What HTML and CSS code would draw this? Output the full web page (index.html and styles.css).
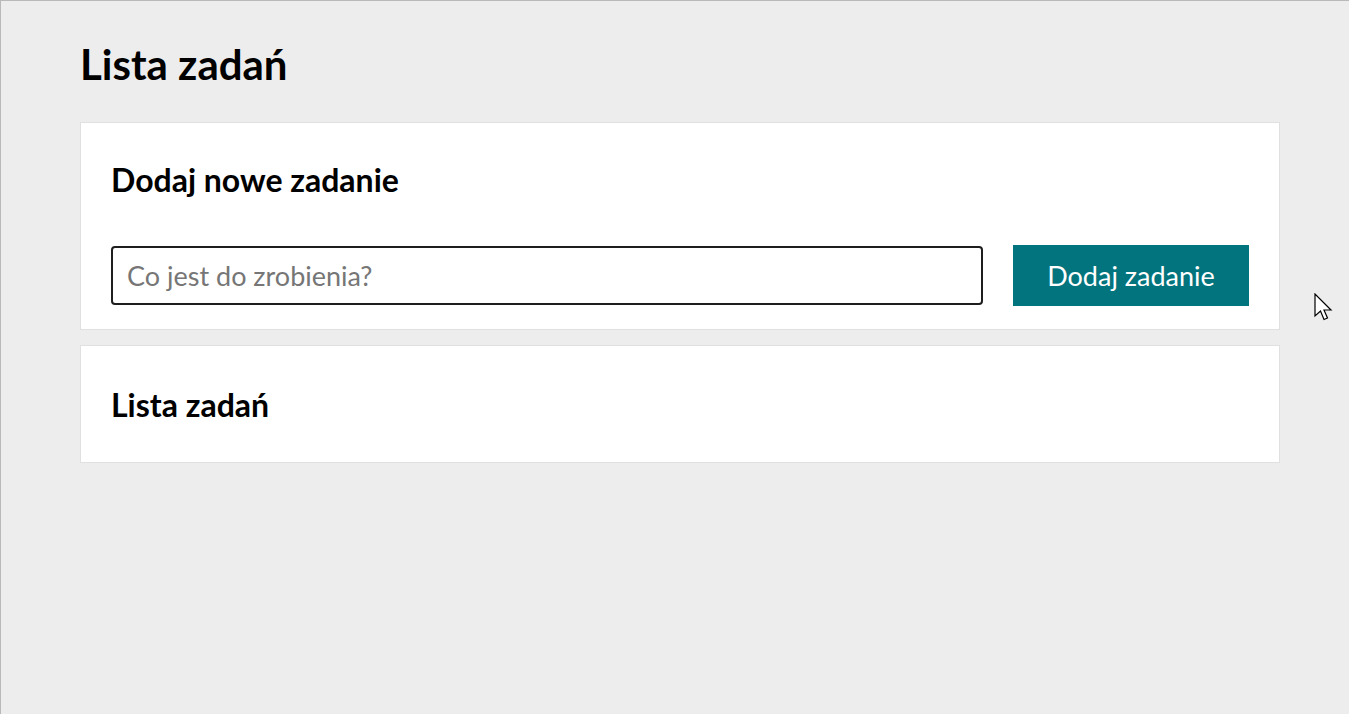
FILE: index.html
```html
<!DOCTYPE html>
<html lang="pl">
<head>
<meta charset="utf-8">
<title>Lista zadań</title>
<link rel="stylesheet" href="styles.css">
</head>
<body>
<div class="page">
  <main class="container">
    <h1 class="title">Lista zadań</h1>
    <section class="card card-add">
      <h2 class="card-title">Dodaj nowe zadanie</h2>
      <form class="add-form">
        <input class="add-input" type="text" placeholder="Co jest do zrobienia?">
        <button class="add-btn" type="button">Dodaj zadanie</button>
      </form>
    </section>
    <section class="card card-list">
      <h2 class="card-title">Lista zadań</h2>
    </section>
  </main>
  <svg class="cursor" width="19" height="28" viewBox="0 0 19 28" aria-hidden="true">
    <path d="M1 1 L1 23 L6.5 18 L10 26.5 L13.5 25 L10 17 L17 17 Z" fill="#fff" stroke="#000" stroke-width="1.2" stroke-linejoin="miter"/>
  </svg>
</div>
</body>
</html>
```

FILE: styles.css
```css
* { box-sizing: border-box; }

html, body {
  margin: 0;
  padding: 0;
}

body {
  font-family: "Lato", "Liberation Sans", sans-serif;
  color: #000;
  background: #ededed;
}

.page {
  position: relative;
  min-height: 100vh;
  border-top: 1px solid #b9b9b9;
  border-left: 1px solid #b9b9b9;
  padding: 38px 0 0 79px;
}

.container {
  width: 1200px;
  display: flex;
  flex-direction: column;
  gap: 15px;
}

.title {
  margin: 0 0 18px;
  font-size: 42px;
  font-weight: 700;
  line-height: 50px;
}

.card {
  background: #fff;
  border: 1px solid #e0e0e0;
  padding: 30px;
}

.card-title {
  margin: 0;
  font-size: 32px;
  font-weight: 700;
  line-height: 38px;
}

.card-add {
  padding-bottom: 23px;
}

.card-add .card-title {
  margin: 8px 0 46px;
}

.card-list .card-title {
  margin: 10px 0 8px;
}

.add-form {
  display: flex;
  gap: 30px;
  align-items: center;
}

.add-input {
  flex: 1;
  height: 59px;
  font-family: inherit;
  font-size: 27px;
  padding: 0 14px;
  border: 2px solid #1e1e1e;
  border-radius: 4px;
  color: #000;
  background: #fff;
  outline: none;
}

.add-input::placeholder {
  color: #767676;
}

.add-btn {
  width: 236px;
  height: 61px;
  border: 0;
  border-radius: 0;
  background: #02747e;
  color: #fff;
  font-family: inherit;
  font-size: 27px;
  cursor: pointer;
}

.cursor {
  position: absolute;
  left: 1313px;
  top: 292px;
}
```
